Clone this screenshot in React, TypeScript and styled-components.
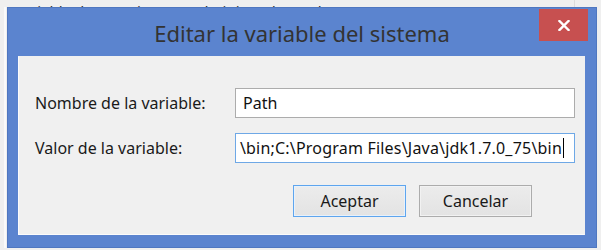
import React from "react";
import styled, { createGlobalStyle } from "styled-components";

const Global = createGlobalStyle`
  html, body { margin: 0; padding: 0; background: #f0f0f0; }
  body { font-family: "Noto Sans", "Open Sans", sans-serif; }
`;

const Page = styled.div`
  width: 601px;
  height: 250px;
  overflow: hidden;
  background: #efefef;
  display: flex;
  flex-direction: column;
`;

const BackStrip = styled.div`
  flex: none;
  height: 7px;
  overflow: hidden;
  padding-left: 14px;
  display: flex;
  align-items: flex-end;
  border-right: 1px solid #dcdcdc;
  width: 560px;
`;

const BackText = styled.div`
  font-size: 15px;
  line-height: 15px;
  color: #333;
  margin-bottom: -12px;
  white-space: nowrap;
`;

const Stage = styled.div`
  flex: none;
  display: flex;
  border-left: 2px solid #fafafa;
  margin-left: 4px;
  padding-left: 1px;
`;

const Window = styled.div`
  width: 567px;
  height: 227px;
  background: #5b84cf;
  border: 1px solid #4f77c0;
  display: flex;
  flex-direction: column;
  padding: 0 11px 12px 10px;
  box-sizing: content-box;
`;

const TitleBar = styled.div`
  flex: none;
  height: 48px;
  display: grid;
  grid-template-columns: 1fr auto 1fr;
  margin: 0 -11px 0 -10px;
`;

const Title = styled.div`
  grid-column: 2;
  align-self: center;
  font-size: 22px;
  color: #333;
  padding-top: 2px;
`;

const CloseButton = styled.div`
  grid-column: 3;
  justify-self: end;
  align-self: start;
  margin-top: 1px;
  margin-right: 8px;
  width: 49px;
  height: 32px;
  background: #c75050;
  display: flex;
  align-items: center;
  justify-content: center;
`;

const Client = styled.div`
  flex: 1;
  background: #f0f0f0;
  border: 1px solid #fbfbfb;
  border-top-color: #f0f0f0;
  border-right-color: #f0f0f0;
  display: flex;
  flex-direction: column;
  padding: 31px 9px 0 16px;
`;

const Form = styled.div`
  display: grid;
  grid-template-columns: 200px 340px;
  row-gap: 15px;
  align-items: center;
`;

const Label = styled.div`
  font-size: 16px;
  color: #1a1a1a;
`;

const TextBox = styled.div<{ $focused?: boolean }>`
  height: 30px;
  box-sizing: border-box;
  background: #fff;
  border: 1px solid ${(p) => (p.$focused ? "#6ea8e6" : "#acacac")};
  display: flex;
  align-items: center;
  justify-content: ${(p) => (p.$focused ? "flex-end" : "flex-start")};
  padding: 0 10px 0 7px;
  overflow: hidden;
  white-space: nowrap;
  font-size: 16px;
  color: #111;
`;

const Value = styled.span`
  flex: none;
  letter-spacing: 0.2px;
`;

const Caret = styled.span`
  display: inline-block;
  width: 1px;
  height: 20px;
  background: #000;
  margin-left: 1px;
  flex: none;
`;

const Buttons = styled.div`
  display: flex;
  justify-content: flex-end;
  gap: 13px;
  margin-top: 22px;
  padding-right: 43px;
`;

const Button = styled.div<{ $default?: boolean }>`
  width: 113px;
  height: 32px;
  box-sizing: border-box;
  border: 1px solid ${(p) => (p.$default ? "#5ea5ee" : "#acacac")};
  box-shadow: inset 0 0 0 1px ${(p) => (p.$default ? "#e7f1fb" : "#f2f2f2")};
  background: linear-gradient(#ececec, #e3e3e3);
  display: flex;
  align-items: center;
  justify-content: center;
  font-size: 16px;
  color: #1a1a1a;
`;

export default function App() {
  return (
    <>
      <Global />
      <Page>
        <BackStrip>
          <BackText>Variable de usuario para Administrador Path</BackText>
        </BackStrip>
        <Stage>
          <Window>
            <TitleBar>
              <Title>Editar la variable del sistema</Title>
              <CloseButton>
                <svg width="12" height="11" viewBox="0 0 12 11">
                  <path d="M1.5 1 L10.5 10 M10.5 1 L1.5 10" stroke="#fff" strokeWidth="2.4" strokeLinecap="square" />
                </svg>
              </CloseButton>
            </TitleBar>
            <Client>
              <Form>
                <Label>Nombre de la variable:</Label>
                <TextBox>Path</TextBox>
                <Label>Valor de la variable:</Label>
                <TextBox $focused>
                  <Value>\bin;C:\Program Files\Java\jdk1.7.0_75\bin</Value>
                  <Caret />
                </TextBox>
              </Form>
              <Buttons>
                <Button $default>Aceptar</Button>
                <Button>Cancelar</Button>
              </Buttons>
            </Client>
          </Window>
        </Stage>
      </Page>
    </>
  );
}
